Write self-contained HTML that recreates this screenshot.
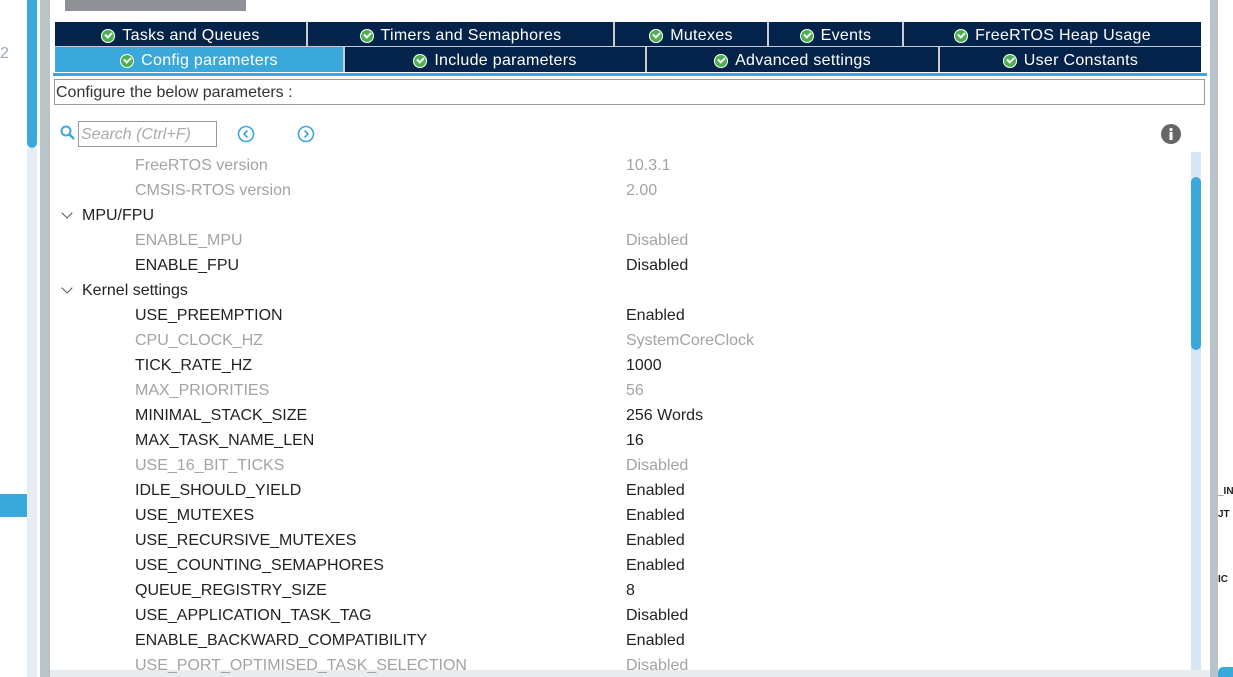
<!DOCTYPE html>
<html><head><meta charset="utf-8"><style>
*{margin:0;padding:0;box-sizing:border-box}
body{width:1233px;height:677px;overflow:hidden;background:#fff;font-family:"Liberation Sans",sans-serif;position:relative}
.a{position:absolute}
.tab{position:absolute;height:25px;padding-top:2px;background:#03234b;color:#fff;font-size:16px;display:flex;align-items:center;justify-content:center;border-right:2px solid #c8ccd0;letter-spacing:0.3px}
.tab.on{background:#3ba8dc}
.ck{display:inline-block;width:14px;height:14px;border-radius:50%;background:#4caf50;margin-right:7px;position:relative;box-shadow:0 0 0 1px #fff inset}
.ck:after{content:"";position:absolute;left:4px;top:3px;width:5px;height:3px;border-left:2px solid #fff;border-bottom:2px solid #fff;transform:rotate(-45deg)}
.r{position:absolute;font-size:16px;color:#222;white-space:nowrap;margin-top:2px}
.g{color:#a3a3a3}
.v{left:626px}
.n{left:135px}
.grp{left:82px}
.chev{position:absolute;left:63px;width:8px;height:8px;border-right:1.5px solid #555;border-bottom:1.5px solid #555;transform:rotate(45deg);margin-top:2px}
</style></head><body>
<div class="a" style="left:0;top:45px;font-size:16px;color:#9ab">2</div>
<div class="a" style="left:27px;top:0;width:10px;height:148px;background:#3ba8dc;border-radius:0 0 5px 5px"></div>
<div class="a" style="left:27px;top:148px;width:10px;height:529px;background:#e6eef4"></div>
<div class="a" style="left:0;top:494px;width:27px;height:23px;background:#3ba8dc"></div>
<div class="a" style="left:40px;top:0;width:10px;height:677px;background:#b9c4ca"></div>
<div class="a" style="left:65px;top:0;width:181px;height:11px;background:#8e9297"></div>

<div class="tab" style="left:55px;top:22px;width:253px"><span class="ck"></span>Tasks and Queues</div>
<div class="tab" style="left:308px;top:22px;width:307px"><span class="ck"></span>Timers and Semaphores</div>
<div class="tab" style="left:615px;top:22px;width:154px"><span class="ck"></span>Mutexes</div>
<div class="tab" style="left:769px;top:22px;width:135px"><span class="ck"></span>Events</div>
<div class="tab" style="left:904px;top:22px;width:297px;border-right:none"><span class="ck"></span>FreeRTOS Heap Usage</div>
<div class="a" style="left:55px;top:46px;width:1146px;height:1px;background:#c8ccd0"></div>
<div class="tab on" style="left:55px;top:47px;width:290px"><span class="ck"></span>Config parameters</div>
<div class="tab" style="left:345px;top:47px;width:302px"><span class="ck"></span>Include parameters</div>
<div class="tab" style="left:647px;top:47px;width:293px"><span class="ck"></span>Advanced settings</div>
<div class="tab" style="left:940px;top:47px;width:261px;border-right:none"><span class="ck"></span>User Constants</div>
<div class="a" style="left:53px;top:73px;width:1154px;height:3px;background:#3ba8dc"></div>

<div class="a" style="left:54px;top:79px;width:1151px;height:26px;border:1px solid #9a9a9a;font-size:16px;color:#333;padding:4px 0 0 1px">Configure the below parameters :</div>

<svg class="a" style="left:60px;top:125px" width="16" height="16"><circle cx="6" cy="6" r="4.5" fill="none" stroke="#3ba8dc" stroke-width="2"/><line x1="9.5" y1="9.5" x2="14" y2="14" stroke="#3ba8dc" stroke-width="2.5"/></svg>
<div class="a" style="left:78px;top:121px;width:139px;height:26px;border:1px solid #999;font-size:16px;font-style:italic;color:#aaa;padding:4px 0 0 2px">Search (Ctrl+F)</div>
<svg class="a" style="left:237px;top:125px" width="18" height="18"><circle cx="9" cy="9" r="7.5" fill="none" stroke="#3ba8dc" stroke-width="1.6"/><path d="M10.5 5.5 L7 9 L10.5 12.5" fill="none" stroke="#3ba8dc" stroke-width="1.6"/></svg>
<svg class="a" style="left:297px;top:125px" width="18" height="18"><circle cx="9" cy="9" r="7.5" fill="none" stroke="#3ba8dc" stroke-width="1.6"/><path d="M7.5 5.5 L11 9 L7.5 12.5" fill="none" stroke="#3ba8dc" stroke-width="1.6"/></svg>
<svg class="a" style="left:1160px;top:123px" width="22" height="22"><circle cx="11" cy="11" r="10" fill="#666"/><circle cx="11" cy="6.5" r="1.6" fill="#fff"/><rect x="9.5" y="9" width="3" height="8" fill="#fff"/></svg>

<div class="a" style="left:1191px;top:152px;width:10px;height:518px;background:#d6e6f3"></div>
<div class="a" style="left:1191px;top:177px;width:10px;height:173px;background:#3ba8dc;border-radius:5px"></div>
<div class="a" style="left:1210px;top:0;width:8px;height:677px;background:#b9c4ca"></div>
<div class="a" style="left:50px;top:670px;width:1160px;height:7px;background:#e8ecef"></div>
<div class="a" style="left:1218px;top:667px;width:15px;height:10px;background:#3ba8dc;border-radius:5px 0 0 0"></div>
<div class="a" style="left:1218px;top:486px;font-size:10px;font-weight:bold;color:#222">_IN</div>
<div class="a" style="left:1218px;top:509px;font-size:10px;font-weight:bold;color:#222">JT</div>
<div class="a" style="left:1218px;top:574px;font-size:10px;font-weight:bold;color:#222">IC</div>

<div class="r n g" style="top:155px">FreeRTOS version</div><div class="r v g" style="top:155px">10.3.1</div>
<div class="r n g" style="top:180px">CMSIS-RTOS version</div><div class="r v g" style="top:180px">2.00</div>
<div class="chev" style="top:207px"></div><div class="r grp" style="top:205px">MPU/FPU</div>
<div class="r n g" style="top:230px">ENABLE_MPU</div><div class="r v g" style="top:230px">Disabled</div>
<div class="r n" style="top:255px">ENABLE_FPU</div><div class="r v" style="top:255px">Disabled</div>
<div class="chev" style="top:282px"></div><div class="r grp" style="top:280px">Kernel settings</div>
<div class="r n" style="top:305px">USE_PREEMPTION</div><div class="r v" style="top:305px">Enabled</div>
<div class="r n g" style="top:330px">CPU_CLOCK_HZ</div><div class="r v g" style="top:330px">SystemCoreClock</div>
<div class="r n" style="top:355px">TICK_RATE_HZ</div><div class="r v" style="top:355px">1000</div>
<div class="r n g" style="top:380px">MAX_PRIORITIES</div><div class="r v g" style="top:380px">56</div>
<div class="r n" style="top:405px">MINIMAL_STACK_SIZE</div><div class="r v" style="top:405px">256 Words</div>
<div class="r n" style="top:430px">MAX_TASK_NAME_LEN</div><div class="r v" style="top:430px">16</div>
<div class="r n g" style="top:455px">USE_16_BIT_TICKS</div><div class="r v g" style="top:455px">Disabled</div>
<div class="r n" style="top:480px">IDLE_SHOULD_YIELD</div><div class="r v" style="top:480px">Enabled</div>
<div class="r n" style="top:505px">USE_MUTEXES</div><div class="r v" style="top:505px">Enabled</div>
<div class="r n" style="top:530px">USE_RECURSIVE_MUTEXES</div><div class="r v" style="top:530px">Enabled</div>
<div class="r n" style="top:555px">USE_COUNTING_SEMAPHORES</div><div class="r v" style="top:555px">Enabled</div>
<div class="r n" style="top:580px">QUEUE_REGISTRY_SIZE</div><div class="r v" style="top:580px">8</div>
<div class="r n" style="top:605px">USE_APPLICATION_TASK_TAG</div><div class="r v" style="top:605px">Disabled</div>
<div class="r n" style="top:630px">ENABLE_BACKWARD_COMPATIBILITY</div><div class="r v" style="top:630px">Enabled</div>
<div class="r n g" style="top:655px">USE_PORT_OPTIMISED_TASK_SELECTION</div><div class="r v g" style="top:655px">Disabled</div>
</body></html>
